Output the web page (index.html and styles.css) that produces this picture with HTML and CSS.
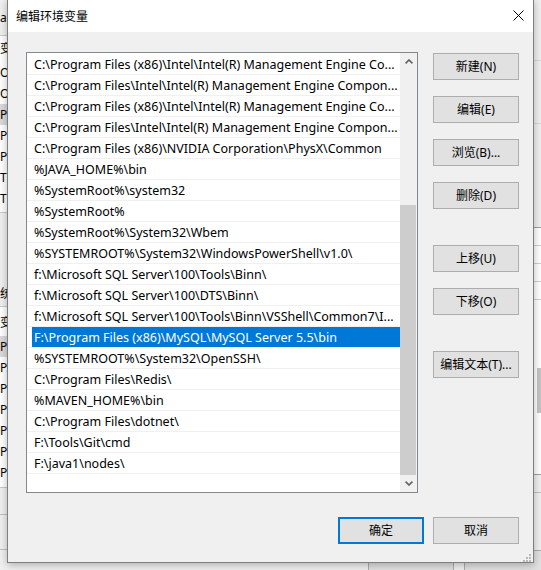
FILE: index.html
```html
<!DOCTYPE html>
<html lang="zh-CN">
<head>
<meta charset="utf-8">
<title>编辑环境变量</title>
<link rel="stylesheet" href="styles.css">
</head>
<body>
<div class="desktop">
  <div class="bgwin">
    <div class="bg-top">
      <div class="bg-left">
        <div class="bgl-cap">ar</div>
        <div class="bgl-list user">
          <div class="bgl-head">变量</div>
          <div class="bgl-row">OneDrive</div>
          <div class="bgl-row">OneDriveConsumer</div>
          <div class="bgl-row sel">Path</div>
          <div class="bgl-row">PyCharm</div>
          <div class="bgl-row">PyCharm Community Edition</div>
          <div class="bgl-row">TEMP</div>
          <div class="bgl-row">TMP</div>
        </div>
        <div class="bgl-label">系统变量(S)</div>
        <div class="bgl-list sys">
          <div class="bgl-head">变量</div>
          <div class="bgl-row sel">Path</div>
          <div class="bgl-row">PATHEXT</div>
          <div class="bgl-row">PERL5LIB</div>
          <div class="bgl-row">PROCESSOR_ARCHITECTURE</div>
          <div class="bgl-row">PROCESSOR_IDENTIFIER</div>
          <div class="bgl-row">PROCESSOR_LEVEL</div>
          <div class="bgl-row">PROCESSOR_REVISION</div>
        </div>
        <div class="bgl-btnrow"></div>
      </div>
      <div class="bg-mid"></div>
      <div class="bg-right">
        <div class="bgr-a"></div>
        <div class="bgr-b"></div>
        <div class="bgr-c"></div>
        <div class="bgr-line"></div>
        <div class="bgr-line"></div>
        <div class="bgr-line"></div>
        <div class="bgr-line last"></div>
        <div class="bgr-scroll"><div class="bgr-thumb"></div></div>
        <div class="bgr-d"></div>
      </div>
    </div>
    <div class="bg-bottom">
      <div class="bg-btn"></div>
      <div class="bg-btn"></div>
    </div>
  </div>

  <div class="dialog">
    <div class="titlebar">
      <span class="title">编辑环境变量</span>
      <svg class="close" width="11" height="11" viewBox="0 0 11 11"><path d="M0.5 0.5 L10.5 10.5 M10.5 0.5 L0.5 10.5" stroke="#000" stroke-width="1" fill="none"/></svg>
    </div>
    <div class="body">
      <div class="main">
        <div class="list">
          <div class="rows">
            <div class="row"><span class="cell">C:\Program Files (x86)\Intel\Intel(R) Management Engine Co...</span></div>
            <div class="row"><span class="cell">C:\Program Files\Intel\Intel(R) Management Engine Compon...</span></div>
            <div class="row"><span class="cell">C:\Program Files (x86)\Intel\Intel(R) Management Engine Co...</span></div>
            <div class="row"><span class="cell">C:\Program Files\Intel\Intel(R) Management Engine Compon...</span></div>
            <div class="row"><span class="cell">C:\Program Files (x86)\NVIDIA Corporation\PhysX\Common</span></div>
            <div class="row"><span class="cell">%JAVA_HOME%\bin</span></div>
            <div class="row"><span class="cell">%SystemRoot%\system32</span></div>
            <div class="row"><span class="cell">%SystemRoot%</span></div>
            <div class="row"><span class="cell">%SystemRoot%\System32\Wbem</span></div>
            <div class="row"><span class="cell">%SYSTEMROOT%\System32\WindowsPowerShell\v1.0\</span></div>
            <div class="row"><span class="cell">f:\Microsoft SQL Server\100\Tools\Binn\</span></div>
            <div class="row"><span class="cell">f:\Microsoft SQL Server\100\DTS\Binn\</span></div>
            <div class="row"><span class="cell">f:\Microsoft SQL Server\100\Tools\Binn\VSShell\Common7\I...</span></div>
            <div class="row sel"><span class="cell">F:\Program Files (x86)\MySQL\MySQL Server 5.5\bin</span></div>
            <div class="row"><span class="cell">%SYSTEMROOT%\System32\OpenSSH\</span></div>
            <div class="row"><span class="cell">C:\Program Files\Redis\</span></div>
            <div class="row"><span class="cell">%MAVEN_HOME%\bin</span></div>
            <div class="row"><span class="cell">C:\Program Files\dotnet\</span></div>
            <div class="row"><span class="cell">F:\Tools\Git\cmd</span></div>
            <div class="row"><span class="cell">F:\java1\nodes\</span></div>
          </div>
          <div class="vscroll">
            <div class="arrow">
              <svg width="8" height="5" viewBox="0 0 8 5"><path d="M0.6 4.4 L4 1 L7.4 4.4" stroke="#606060" stroke-width="1.6" fill="none"/></svg>
            </div>
            <div class="track"><div class="thumb"></div></div>
            <div class="arrow">
              <svg width="8" height="5" viewBox="0 0 8 5"><path d="M0.6 0.6 L4 4 L7.4 0.6" stroke="#606060" stroke-width="1.6" fill="none"/></svg>
            </div>
          </div>
        </div>
        <div class="side">
          <button class="btn">新建(N)</button>
          <button class="btn">编辑(E)</button>
          <button class="btn">浏览(B)...</button>
          <button class="btn">删除(D)</button>
          <button class="btn spaced">上移(U)</button>
          <button class="btn">下移(O)</button>
          <button class="btn spaced">编辑文本(T)...</button>
        </div>
      </div>
      <div class="footer">
        <button class="btn default">确定</button>
        <button class="btn">取消</button>
      </div>
      <svg class="grip" width="8" height="8" viewBox="0 0 8 8">
        <rect x="6" y="0" width="2" height="2" fill="#b8b8b8"/>
        <rect x="3" y="3" width="2" height="2" fill="#b8b8b8"/>
        <rect x="6" y="3" width="2" height="2" fill="#b8b8b8"/>
        <rect x="0" y="6" width="2" height="2" fill="#b8b8b8"/>
        <rect x="3" y="6" width="2" height="2" fill="#b8b8b8"/>
        <rect x="6" y="6" width="2" height="2" fill="#b8b8b8"/>
      </svg>
    </div>
  </div>
</div>
</body>
</html>
```

FILE: styles.css
```css
* { box-sizing: border-box; }
html, body { margin: 0; padding: 0; }
body {
  font-family: "Noto Sans", "Noto Sans CJK SC", sans-serif;
  color: #000;
}
.desktop {
  position: relative;
  width: 541px;
  height: 570px;
  overflow: hidden;
  background: #f0f0f0;
}

/* background window */
.bgwin {
  position: absolute;
  left: 0;
  top: 0;
  width: 541px;
  height: 570px;
  display: flex;
  flex-direction: column;
  background: #f0f0f0;
  font-size: 12px;
}
.bg-top { display: flex; height: 566px; }
.bg-left { width: 8px; flex: none; overflow: hidden; white-space: nowrap; }
.bgl-cap { height: 35px; padding-top: 9px; line-height: 18px; }
.bgl-list { background: #fff; border-top: 1px solid #c8c8c8; border-bottom: 1px solid #c8c8c8; }
.bgl-list.user { padding-bottom: 3px; }
.bgl-list.user .bgl-head { height: 26px; line-height: 26px; }
.bgl-list.sys { margin-top: 3px; padding-bottom: 4px; }
.bgl-list.sys .bgl-head { height: 29px; padding-top: 2px; line-height: 27px; }
.bgl-row { height: 21px; line-height: 21px; }
.bgl-row.sel { background: #d9d9d9; }
.bgl-label { margin-top: 72px; height: 18px; line-height: 18px; text-indent: -12px; }
.bgl-btnrow { margin-top: 26px; height: 36px; border-top: 1px solid #c0c0c0; border-bottom: 1px solid #c0c0c0; }
.bg-mid { flex: 1; }
.bg-right { width: 8px; display: flex; flex-direction: column; }
.bgr-a { height: 60px; }
.bgr-b { height: 63px; border-top: 1px solid #d8d8d8; }
.bgr-c { height: 105px; border-top: 1px solid #d8d8d8; border-bottom: 1px solid #a0a0a0; }
.bgr-line { height: 18px; border-bottom: 1px solid #d0d0d0; background: #fff; }
.bgr-line.last { height: 18px; }
.bgr-scroll { height: 175px; padding: 68px 0 0 4px; background: #fff; border-bottom: 1px solid #a0a0a0; }
.bgr-thumb { width: 4px; height: 45px; background: #c4c4c4; }
.bgr-d { height: 18px; border-bottom: 1px solid #c0c0c0; }
.bg-bottom { display: flex; gap: 10px; padding-left: 368px; }
.bg-btn { width: 86px; height: 24px; border: 1px solid #adadad; background: #e1e1e1; flex: none; }

/* dialog */
.dialog {
  position: absolute;
  left: 7px;
  top: -1px;
  width: 527px;
  height: 564px;
  border: 1px solid #7f7f7f;
  background: #f0f0f0;
  box-shadow: 0 2px 8px rgba(0, 0, 0, 0.28);
  display: flex;
  flex-direction: column;
}
.titlebar {
  height: 32px;
  flex: none;
  background: #fff;
  display: flex;
  align-items: center;
  justify-content: space-between;
  padding: 0 9px 0 8px;
}
.title {
  font-family: "Noto Sans CJK SC", sans-serif;
  font-size: 12px;
  line-height: 16px;
}
.close { display: block; margin-top: -1px; }
.body {
  position: relative;
  flex: 1;
  background: #f0f0f0;
  padding: 20px 14px 0 18px;
}
.main { display: flex; gap: 15px; }
.list {
  width: 392px;
  height: 441px;
  border: 1px solid #828790;
  background: #fff;
  display: flex;
}
.rows { flex: 1; padding-top: 1px; overflow: hidden; }
.row { height: 21px; border-bottom: 1px solid #f0f0f0; }
.cell {
  display: block;
  height: 20px;
  margin-left: 5px;
  padding-left: 2px;
  font-size: 12.5px;
  line-height: 20px;
  padding-top: 1px;
  white-space: nowrap;
  overflow: hidden;
}
.row.sel .cell { background: #0078d7; color: #fff; }
.vscroll {
  width: 17px;
  flex: none;
  background: #f0f0f0;
  display: flex;
  flex-direction: column;
}
.arrow {
  height: 17px;
  flex: none;
  display: flex;
  align-items: center;
  justify-content: center;
}
.arrow svg { display: block; }
.track { flex: 1; display: flex; flex-direction: column; justify-content: flex-end; }
.thumb { width: 16px; height: 270px; background: #cdcdcd; }
.side { display: flex; flex-direction: column; gap: 16px; padding-top: 1px; }
.btn {
  width: 86px;
  height: 27px;
  padding: 0;
  margin: 0;
  border: 1px solid #adadad;
  background: #e1e1e1;
  font-family: "Noto Sans", "Noto Sans CJK SC", sans-serif;
  font-size: 12px;
  color: #000;
  display: flex;
  align-items: center;
  justify-content: center;
  line-height: 16px;
}
.btn.spaced { margin-top: 20px; }
.btn.default { border: 2px solid #0078d7; }
.footer { display: flex; justify-content: flex-end; gap: 9px; margin-top: 24px; }
.grip { position: absolute; right: 2px; bottom: 0; display: block; }
```
